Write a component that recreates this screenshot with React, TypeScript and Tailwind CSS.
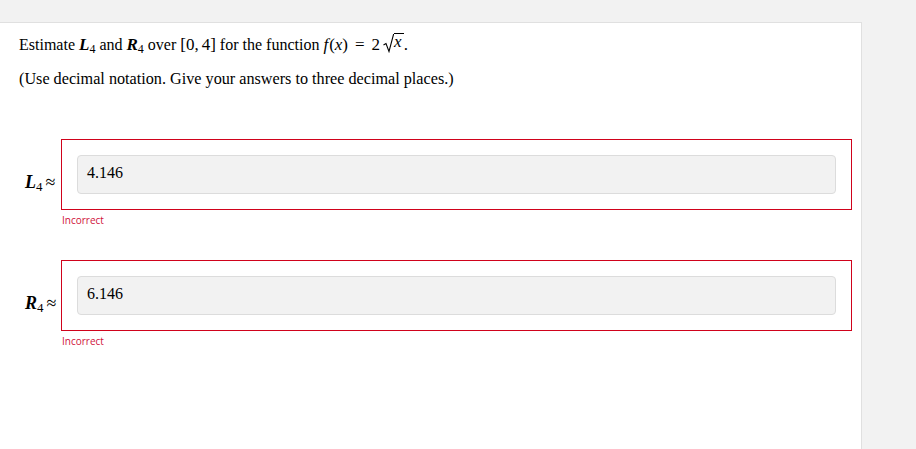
import React from 'react'

const serif = { fontFamily: '"Liberation Serif", "Times New Roman", serif' }

function Var({ name, sub, big }: { name: string; sub: string; big?: boolean }) {
  return (
    <span className="whitespace-nowrap">
      <span className={`italic font-bold ${big ? 'text-[18px]' : 'text-[17px]'}`}>{name}</span>
      <span className={`relative top-[3px] ${big ? 'text-[13px]' : 'text-[12px]'}`}>{sub}</span>
    </span>
  )
}

function AnswerRow({ name, value }: { name: string; value: string }) {
  return (
    <div className="flex">
      <div className="w-[61px] shrink-0 pt-[33px] pl-[25px] text-[16px] leading-[20px] text-black whitespace-nowrap" style={serif}>
        <Var name={name} sub="4" big />
        <span className="ml-[3px] text-[18px] leading-[20px]">≈</span>
      </div>
      <div className="flex-1 pr-[9px]">
        <div className="border border-[#d0021b] p-[15px]">
          <div
            className="h-[39px] rounded-[4px] border border-[#dcdcdc] bg-[#f2f2f2] pl-[9px] pt-[5px] text-[16px] text-black"
            style={serif}
          >
            {value}
          </div>
        </div>
        <div
          className="pl-[1px] pt-[3px] text-[10px] text-[#d0103a]"
          style={{ fontFamily: '"Open Sans", "Noto Sans", sans-serif' }}
        >
          Incorrect
        </div>
      </div>
    </div>
  )
}

export default function App() {
  return (
    <div className="min-h-screen bg-[#f2f2f2] pt-[22px]">
      <div className="w-[862px] min-h-[427px] bg-white border-r border-t border-[#e0e0e0]">
        <div className="pl-[19px] pt-[7px] text-[16px] text-black" style={serif}>
          <p className="leading-[20px] whitespace-nowrap">
            Estimate <Var name="L" sub="4" /> and <Var name="R" sub="4" /> over{' '}
            <span className="text-[17px]">[0,<span className="ml-[3px]">4]</span></span> for the function{' '}
            <span className="text-[17px]">
              <span className="italic">f</span>
              <span className="ml-[1px]">(</span>
              <span className="italic">x</span>)<span className="mx-[7px]">=</span>2
              <span className="relative inline-flex items-end ml-[3px]">
                <svg width="11" height="20" viewBox="0 0 11 20" className="relative top-[3px]">
                  <path d="M0.5 12 L3 10.5 L6 18.5 L10.5 1.5 L11 1.5" fill="none" stroke="black" strokeWidth="1.1" />
                </svg>
                <span className="italic border-t border-black leading-[16px] pr-[2px]">x</span>
              </span>
              .
            </span>
          </p>
          <p className="mt-[13px] leading-[20px] text-[16.2px]">
            (Use decimal notation. Give your answers to three decimal places.)
          </p>
        </div>
        <div className="mt-[50px] flex flex-col gap-[32px]">
          <AnswerRow name="L" value="4.146" />
          <AnswerRow name="R" value="6.146" />
        </div>
      </div>
    </div>
  )
}
